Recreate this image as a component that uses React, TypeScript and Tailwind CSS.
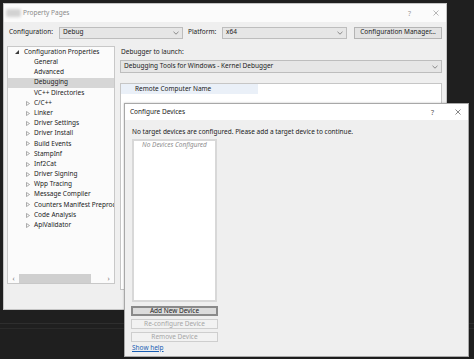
import React from "react";

const Chevron = () => (
  <svg width="6" height="4" viewBox="0 0 6 4" className="shrink-0">
    <polyline points="0.5,0.8 3,3.2 5.5,0.8" fill="none" stroke="#707070" strokeWidth="0.8" />
  </svg>
);

const CloseX = ({ color = "#555" }: { color?: string }) => (
  <svg width="6" height="6" viewBox="0 0 6 6">
    <line x1="0.5" y1="0.5" x2="5.5" y2="5.5" stroke={color} strokeWidth="0.7" />
    <line x1="5.5" y1="0.5" x2="0.5" y2="5.5" stroke={color} strokeWidth="0.7" />
  </svg>
);

const Collapsed = () => (
  <svg width="4" height="5" viewBox="0 0 4 5">
    <polygon points="0.5,0.5 3.5,2.5 0.5,4.5" fill="none" stroke="#8a8a8a" strokeWidth="0.7" />
  </svg>
);

const Expanded = () => (
  <svg width="4" height="4" viewBox="0 0 4 4">
    <polygon points="4,0 4,4 0,4" fill="#3c3c3c" />
  </svg>
);

type Item = { label: string; level: 0 | 1; kind: "exp" | "col" | "none"; selected?: boolean };

const items: Item[] = [
  { label: "Configuration Properties", level: 0, kind: "exp" },
  { label: "General", level: 1, kind: "none" },
  { label: "Advanced", level: 1, kind: "none" },
  { label: "Debugging", level: 1, kind: "none", selected: true },
  { label: "VC++ Directories", level: 1, kind: "none" },
  { label: "C/C++", level: 1, kind: "col" },
  { label: "Linker", level: 1, kind: "col" },
  { label: "Driver Settings", level: 1, kind: "col" },
  { label: "Driver Install", level: 1, kind: "col" },
  { label: "Build Events", level: 1, kind: "col" },
  { label: "StampInf", level: 1, kind: "col" },
  { label: "Inf2Cat", level: 1, kind: "col" },
  { label: "Driver Signing", level: 1, kind: "col" },
  { label: "Wpp Tracing", level: 1, kind: "col" },
  { label: "Message Compiler", level: 1, kind: "col" },
  { label: "Counters Manifest Preproc", level: 1, kind: "col" },
  { label: "Code Analysis", level: 1, kind: "col" },
  { label: "ApiValidator", level: 1, kind: "col" },
];

export default function App() {
  return (
    <div className="relative w-[474px] h-[359px] overflow-hidden bg-[#1f1f1f] font-['Noto_Sans',sans-serif] text-[6.5px] leading-none text-[#222222]">
      {/* Property Pages window */}
      <div className="ml-[3px] mt-[3px] w-[444px] h-[307px] bg-[#efefef] border border-[#c4c4c4] flex flex-col">
        {/* title bar */}
        <div className="h-[18px] bg-[#fbfbfb] flex items-center shrink-0">
          <div className="ml-[2px] w-[15px] h-[8px] rounded-[2px] bg-[#d2d2d2] blur-[1.5px]" />
          <span className="ml-[2px] text-[#8a8a8a]">Property Pages</span>
          <span className="ml-auto text-[#9a9a9a] text-[7px]">?</span>
          <div className="ml-[22px] mr-[7px]">
            <CloseX color="#9a9a9a" />
          </div>
        </div>

        {/* configuration row */}
        <div className="mt-[4px] h-[13px] flex items-center pl-[5px]">
          <span className="w-[50px]">Configuration:</span>
          <div className="w-[124px] h-[12px] bg-[#e6e6e6] border border-[#bdbdbd] flex items-center pl-[3px] pr-[3px]">
            <span className="flex-1">Debug</span>
            <Chevron />
          </div>
          <span className="ml-[5px] w-[34px]">Platform:</span>
          <div className="w-[125px] h-[12px] bg-[#e6e6e6] border border-[#bdbdbd] flex items-center pl-[3px] pr-[3px]">
            <span className="flex-1">x64</span>
            <Chevron />
          </div>
          <div className="ml-[7px] w-[88px] h-[12px] bg-[#e3e3e3] border border-[#b4b4b4] flex items-center justify-center">
            Configuration Manager...
          </div>
        </div>

        {/* main area */}
        <div className="mt-[7px] flex pl-[3px]">
          {/* tree */}
          <div className="w-[108px] h-[238px] bg-[#fbfbfb] border border-[#c8c8c8] flex flex-col overflow-hidden">
            <div className="flex-1">
              {items.map((it) => (
                <div
                  key={it.label}
                  className={`h-[10.2px] flex items-center whitespace-nowrap ${it.selected ? "bg-[#d6d6d6]" : ""} ${it.level === 0 ? "pl-[6px]" : "pl-[16px]"}`}
                >
                  <div className="w-[10px] flex items-center shrink-0">
                    {it.kind === "exp" && (
                      <div className="ml-[1px]">
                        <Expanded />
                      </div>
                    )}
                    {it.kind === "col" && (
                      <div className="ml-[2px]">
                        <Collapsed />
                      </div>
                    )}
                  </div>
                  <span>{it.label}</span>
                </div>
              ))}
            </div>
            {/* horizontal scrollbar */}
            <div className="h-[10px] flex items-center shrink-0">
              <span className="w-[11px] text-center text-[#7a7a7a] text-[7px]">‹</span>
              <div className="w-[72px] h-[9px] bg-[#cfcfcf]" />
              <span className="ml-auto w-[11px] text-center text-[#7a7a7a] text-[7px]">›</span>
            </div>
          </div>

          {/* right column */}
          <div className="ml-[5px] w-[322px] flex flex-col">
            <div className="h-[12px] flex items-center pl-[1px]">Debugger to launch:</div>
            <div className="mt-[2px] h-[13px] bg-[#e6e6e6] border border-[#bdbdbd] flex items-center pl-[3px] pr-[3px]">
              <span className="flex-1">Debugging Tools for Windows - Kernel Debugger</span>
              <Chevron />
            </div>
            <div className="mt-[10px] h-[207px] bg-white border border-[#c6c6c6]">
              <div className="h-[10px] w-[137px] bg-[#eaf0f8] flex items-center pl-[14px]">
                Remote Computer Name
              </div>
            </div>
          </div>
        </div>
      </div>

      {/* dark area decorations */}
      <div className="mt-[13px] h-px bg-[#2e2e2e]" />
      <div className="mt-[4px] h-px bg-[#2a2a2a]" />

      {/* Configure Devices dialog */}
      <div className="absolute left-[124px] top-[103px] w-[345px] h-[254px] bg-[#efefef] border border-[#a8a8a8] shadow-[0_0_2px_rgba(0,0,0,0.25)] flex flex-col">
        <div className="h-[16px] bg-white flex items-center shrink-0">
          <span className="ml-[5px]">Configure Devices</span>
          <span className="ml-auto text-[#555] text-[7px]">?</span>
          <div className="ml-[21px] mr-[7px]">
            <CloseX />
          </div>
        </div>
        <div className="mt-[7px] h-[10px] flex items-center pl-[7px]">
          No target devices are configured. Please add a target device to continue.
        </div>
        <div className="mt-[2px] ml-[7px] w-[85px] h-[163px] bg-white border-2 border-[#d8d8d8] flex flex-col items-center">
          <span className="mt-[1px] italic text-[#8e8e8e]">No Devices Configured</span>
        </div>
        <div className="mt-[4px] ml-[6px] w-[87px] flex flex-col gap-[3px]">
          <div className="h-[10px] bg-[#dcdcdc] border-2 border-[#8a8a8a] flex items-center justify-center">
            Add New Device
          </div>
          <div className="h-[10px] bg-[#f2f2f2] border border-[#cecece] flex items-center justify-center text-[#a6a6a6]">
            Re-configure Device
          </div>
          <div className="h-[10px] bg-[#f2f2f2] border border-[#cecece] flex items-center justify-center text-[#a6a6a6]">
            Remove Device
          </div>
        </div>
        <div className="mt-[2px] ml-[7px] h-[8px] flex items-center">
          <span className="text-[#1a5fb4] underline">Show help</span>
        </div>
      </div>
    </div>
  );
}
